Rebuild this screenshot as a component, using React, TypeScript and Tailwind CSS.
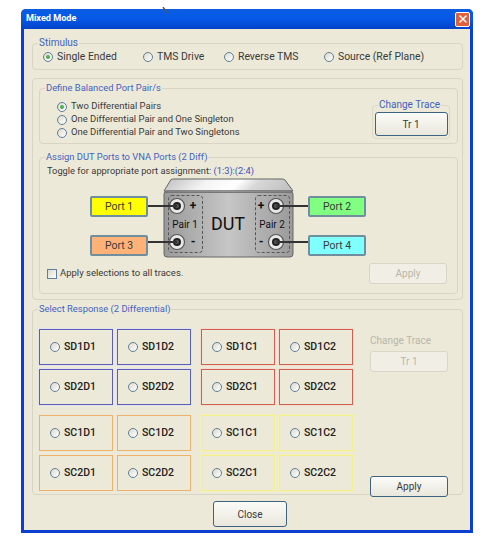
import React from "react";
import { X } from "lucide-react";

const font = "font-['Roboto',Arial,sans-serif]";

function Radio({ checked = false }: { checked?: boolean }) {
  return (
    <span className="flex h-[10px] w-[10px] shrink-0 items-center justify-center rounded-full border border-[#5f7f9c] bg-gradient-to-br from-[#dcd9cc] to-white">
      {checked && <span className="h-[4px] w-[4px] rounded-full bg-[#4cb04c]" />}
    </span>
  );
}

function Option({ label, checked, className = "" }: { label: string; checked?: boolean; className?: string }) {
  return (
    <label className={`flex items-center gap-[4px] whitespace-nowrap text-[#3a3a3a] ${className}`}>
      <Radio checked={checked} />
      <span>{label}</span>
    </label>
  );
}

function Group({ title, className = "", legendSize = "text-[9.4px]", children }: { title: string; className?: string; legendSize?: string; children: React.ReactNode }) {
  return (
    <fieldset className={`rounded-[4px] border border-[#d8d5c4] ${className}`}>
      <legend className={`ml-[5px] whitespace-nowrap px-[1px] leading-[12px] text-[#3f62c0] ${legendSize}`}>{title}</legend>
      {children}
    </fieldset>
  );
}

function XpButton({ label, disabled, className = "" }: { label: string; disabled?: boolean; className?: string }) {
  return (
    <button
      className={`rounded-[3px] border text-[10px] ${
        disabled
          ? "border-[#d9d6c8] bg-[#f1efe5] text-[#b8b6a8]"
          : "border-[#3d6383] bg-gradient-to-b from-[#fbfbf8] to-[#e9e7dc] text-[#3a3a3a]"
      } ${className}`}
    >
      {label}
    </button>
  );
}

function PortBox({ label, color }: { label: string; color: string }) {
  return (
    <div className={`flex h-[21px] w-[58px] items-center justify-center rounded-[2px] border-2 border-[#6f8f9f] text-[10.4px] text-[#3a3a3a] ${color}`}>
      {label}
    </div>
  );
}

function Jack({ cx, cy }: { cx: number; cy: number }) {
  return (
    <g>
      <circle cx={cx} cy={cy} r={7.5} fill="#e8e8e8" stroke="#555" strokeWidth={1.2} />
      <circle cx={cx} cy={cy} r={4} fill="#222" />
      <circle cx={cx} cy={cy} r={2} fill="#555" />
    </g>
  );
}

function DutDrawing() {
  return (
    <svg width="160" height="80" viewBox="0 0 160 80" className="shrink-0">
      <defs>
        <linearGradient id="lid" x1="0" x2="1" y1="0" y2="0.1">
          <stop offset="0" stopColor="#bdbdbd" />
          <stop offset="0.35" stopColor="#f4f4f4" />
          <stop offset="0.6" stopColor="#ffffff" />
          <stop offset="0.75" stopColor="#d8d8d8" />
          <stop offset="1" stopColor="#c4c4c4" />
        </linearGradient>
        <linearGradient id="body" x1="0" x2="1" y1="0" y2="0">
          <stop offset="0" stopColor="#9a9a9a" />
          <stop offset="0.5" stopColor="#c6c6c6" />
          <stop offset="1" stopColor="#9a9a9a" />
        </linearGradient>
      </defs>
      <path d="M16 13 L23 1.5 Q24 1 26 1 L134 1 Q136 1 137 2 L145 13 Z" fill="url(#lid)" stroke="#666" />
      <rect x="16" y="13" width="129" height="66" rx="3" fill="url(#body)" stroke="#666" />
      <line x1="16" x2="145" y1="14.5" y2="14.5" stroke="#777" />
      <rect x="20.5" y="17.5" width="34" height="57" rx="3" fill="none" stroke="#555" strokeDasharray="3 2" />
      <rect x="107.5" y="17.5" width="34" height="57" rx="3" fill="none" stroke="#555" strokeDasharray="3 2" />
      <Jack cx={29} cy={28} />
      <Jack cx={29} cy={64} />
      <Jack cx={128} cy={28} />
      <Jack cx={128} cy={64} />
      <line x1="0" x2="29" y1="28" y2="28" stroke="#333" strokeWidth="2" />
      <line x1="0" x2="29" y1="64" y2="64" stroke="#333" strokeWidth="2" />
      <line x1="128" x2="160" y1="28" y2="28" stroke="#333" strokeWidth="2" />
      <line x1="128" x2="160" y1="64" y2="64" stroke="#333" strokeWidth="2" />
      <g fontFamily="Roboto, Arial, sans-serif" fill="#111" textAnchor="middle">
        <text x="45" y="32" fontSize="12" fontWeight="700">+</text>
        <text x="45" y="68" fontSize="12" fontWeight="700">-</text>
        <text x="113" y="32" fontSize="12" fontWeight="700">+</text>
        <text x="113" y="68" fontSize="12" fontWeight="700">-</text>
        <text x="37" y="50" fontSize="10">Pair 1</text>
        <text x="124" y="50" fontSize="10">Pair 2</text>
        <text x="80" y="52" fontSize="18">DUT</text>
      </g>
    </svg>
  );
}

const cellTones = {
  blue: "border-[#5a5fb4] shadow-[0_0_0_1px_#e4e2ee]",
  red: "border-[#d0604f] shadow-[0_0_0_1px_#f4dcd0]",
  orange: "border-[#eeb26e]",
  yellow: "border-[#f4ee8c] shadow-[0_0_0_1px_#f3f0b8]",
};

function Cell({ label, tone, className = "" }: { label: string; tone: keyof typeof cellTones; className?: string }) {
  return (
    <label className={`flex h-[36px] w-[74px] items-center gap-[4px] border pl-[10px] text-[10.5px] font-medium text-[#222] ${cellTones[tone]} ${className}`}>
      <Radio />
      <span>{label}</span>
    </label>
  );
}

function CellRow({ labels, tones, className = "" }: { labels: string[]; tones: [keyof typeof cellTones, keyof typeof cellTones]; className?: string }) {
  return (
    <div className={`flex ${className}`}>
      <Cell label={labels[0]} tone={tones[0]} />
      <Cell label={labels[1]} tone={tones[0]} className="ml-[4px]" />
      <Cell label={labels[2]} tone={tones[1]} className="ml-[10px]" />
      <Cell label={labels[3]} tone={tones[1]} className="ml-[4px]" />
    </div>
  );
}

export default function App() {
  return (
    <div className={`relative h-[553px] w-[483px] overflow-hidden bg-white pl-[21px] pt-[9px] ${font}`}>
      {/* mouse pointer left over the title bar */}
      <svg width="8" height="7" viewBox="0 0 8 7" className="absolute left-[162px] top-[7px]">
        <path d="M1 0 L3 3 L6 6" fill="none" stroke="#555" strokeWidth="1.4" />
      </svg>

      <div className="flex h-[524px] w-[452px] flex-col rounded-t-[5px] bg-[#0a3fd0]">
        <div className="flex h-[20px] shrink-0 items-center justify-between rounded-t-[5px] bg-gradient-to-b from-[#0a5de0] via-[#0658e8] to-[#0342c8] pl-[5px] pr-[3px]">
          <span className="text-[9.1px] font-bold text-white">Mixed Mode</span>
          <span className="flex h-[15px] w-[15px] items-center justify-center rounded-[2px] border border-white bg-[#e0603c]">
            <X size={12} strokeWidth={3} color="white" />
          </span>
        </div>

        <div className="mx-[3px] mb-[3px] flex flex-1 flex-col items-start bg-[#ece9d8] pl-[8px] text-[9.45px]">
          <Group title="Stimulus" className="mt-[8px] flex h-[33px] w-[431px] items-center" legendSize="text-[10px]">
            <div className="ml-[10px] flex text-[10.4px]">
              <Option label="Single Ended" checked className="w-[100px]" />
              <Option label="TMS Drive" className="w-[81px]" />
              <Option label="Reverse TMS" className="w-[100px]" />
              <Option label="Source (Ref Plane)" />
            </div>
          </Group>

          <div className="mt-[8px] flex h-[222px] w-[431px] flex-col gap-[7px] rounded-[4px] border border-[#d8d5c4] px-[6px] pt-[3px]">
            <Group title="Define Balanced Port Pair/s" className="flex h-[62px] w-[419px] shrink-0">
              <div className="ml-[17px] mt-[7px] flex flex-col gap-[2px]">
                <Option label="Two Differential Pairs" checked className="h-[11px]" />
                <Option label="One Differential Pair and One Singleton" className="h-[11px]" />
                <Option label="One Differential Pair and Two Singletons" className="h-[11px]" />
              </div>
              <Group title="Change Trace" className="ml-auto mr-[7px] mt-[5px] flex h-[40px] w-[78px] flex-col items-center border-[#dcd9c8]" legendSize="text-[10px]">
                <XpButton label="Tr 1" className="mt-[1px] h-[24px] w-[73px]" />
              </Group>
            </Group>

            <Group title="Assign DUT Ports to VNA Ports (2 Diff)" className="h-[143px] w-[419px] shrink-0">
              <div className="ml-[7px] mt-[1px] h-[13px] text-[9.3px] leading-[13px] text-[#3a3a3a]">
                Toggle for appropriate port assignment: <span className="text-[#3f50c0]">(1:3):(2:4)</span>
              </div>
              <div className="ml-[50px] mt-[1px] flex">
                <div className="mt-[18px] flex flex-col gap-[18px]">
                  <PortBox label="Port 1" color="bg-[#ffff00]" />
                  <PortBox label="Port 3" color="bg-[#ffb278]" />
                </div>
                <DutDrawing />
                <div className="mt-[18px] flex flex-col gap-[18px]">
                  <PortBox label="Port 2" color="bg-[#80ff80]" />
                  <PortBox label="Port 4" color="bg-[#80ffff]" />
                </div>
              </div>
              <div className="mt-[5px] flex items-center pl-[7px] pr-[10px]">
                <span className="h-[10px] w-[10px] border border-[#5f7f9c] bg-gradient-to-br from-[#dcd9cc] to-white" />
                <span className="ml-[3px] text-[9.5px] text-[#3a3a3a]">Apply selections to all traces.</span>
                <XpButton label="Apply" disabled className="ml-auto h-[21px] w-[78px]" />
              </div>
            </Group>
          </div>

          <Group title="Select Response (2 Differential)" className="mt-[3px] flex h-[192px] w-[431px] shrink-0">
            <div className="ml-[6px] mt-[14px] flex flex-col">
              <CellRow labels={["SD1D1", "SD1D2", "SD1C1", "SD1C2"]} tones={["blue", "red"]} />
              <CellRow labels={["SD2D1", "SD2D2", "SD2C1", "SD2C2"]} tones={["blue", "red"]} className="mt-[4px]" />
              <CellRow labels={["SC1D1", "SC1D2", "SC1C1", "SC1C2"]} tones={["orange", "yellow"]} className="mt-[10px]" />
              <CellRow labels={["SC2D1", "SC2D2", "SC2C1", "SC2C2"]} tones={["orange", "yellow"]} className="mt-[4px]" />
            </div>
            <div className="ml-[17px] mt-[19px] flex w-[78px] flex-col">
              <span className="h-[13px] text-[10px] leading-[13px] text-[#b8b6a8]">Change Trace</span>
              <XpButton label="Tr 1" disabled className="mt-[4px] h-[21px] w-[78px]" />
              <XpButton label="Apply" className="mt-[104px] h-[21px] w-[78px]" />
            </div>
          </Group>

          <XpButton label="Close" className="ml-[181px] mt-[6px] h-[26px] w-[74px]" />
        </div>
      </div>
    </div>
  );
}
